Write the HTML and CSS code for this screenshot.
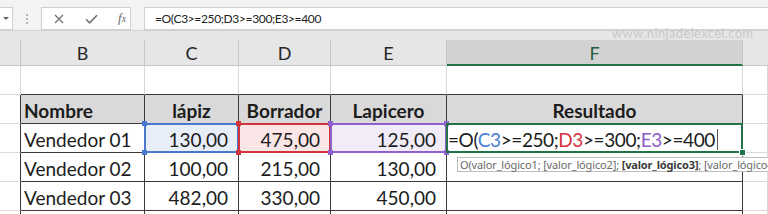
FILE: index.html
```html
<!DOCTYPE html>
<html lang="es">
<head>
<meta charset="utf-8">
<title>Excel - función O</title>
<link rel="stylesheet" href="styles.css">
</head>
<body>
<div class="app">
  <div class="toolbar">
    <div class="namebox"><span class="arrow"></span></div>
    <div class="dots"><i></i><i></i><i></i></div>
    <div class="fxbox">
      <svg class="ic-x" width="10" height="10" viewBox="0 0 10 10"><path d="M1 1L9 9M9 1L1 9" stroke="#707070" stroke-width="1.3" fill="none"/></svg>
      <svg class="ic-ok" width="13" height="10" viewBox="0 0 13 10"><path d="M1 5.2L4.6 8.8L12 1.2" stroke="#707070" stroke-width="1.6" fill="none"/></svg>
      <span class="ic-fx"><i>f</i><i class="sx">x</i></span>
    </div>
    <div class="formula">=O(C3&gt;=250;D3&gt;=300;E3&gt;=400</div>
  </div>
  <div class="watermark">www.ninjadelexcel.com</div>

  <div class="hdrwrap">
    <div class="cols colhdr">
      <div class="h"></div>
      <div class="h">B</div>
      <div class="h">C</div>
      <div class="h">D</div>
      <div class="h">E</div>
      <div class="h sel">F</div>
      <div class="h last"></div>
    </div>
  </div>

  <div class="cols sheet">
    <!-- row 1 -->
    <div class="c"></div>
    <div class="c top"></div>
    <div class="c top"></div>
    <div class="c top"></div>
    <div class="c top"></div>
    <div class="c top"></div>
    <div class="c"></div>
    <!-- row 2 -->
    <div class="c lb"></div>
    <div class="c t th left">Nombre</div>
    <div class="c t th">lápiz</div>
    <div class="c t th">Borrador</div>
    <div class="c t th">Lapicero</div>
    <div class="c t th">Resultado</div>
    <div class="c"></div>
    <!-- row 3 -->
    <div class="c lb"></div>
    <div class="c t">Vendedor 01</div>
    <div class="c t num ref blue">130,00<span class="hd tl"></span><span class="hd tr"></span><span class="hd bl"></span><span class="hd br"></span></div>
    <div class="c t num ref red">475,00<span class="hd tl"></span><span class="hd tr"></span><span class="hd bl"></span><span class="hd br"></span></div>
    <div class="c t num ref purple">125,00<span class="hd tl"></span><span class="hd tr"></span><span class="hd bl"></span><span class="hd br"></span></div>
    <div class="c t active"><span class="ftxt">=O(<span class="rb">C3</span>&gt;=250;<span class="rr">D3</span>&gt;=300;<span class="rp">E3</span>&gt;=400</span><span class="caret"></span><span class="fill"></span>
      <div class="tip">O(valor_lógico1; [valor_lógico2]; <b>[valor_lógico3]</b>; [valor_lógico4]</div>
    </div>
    <div class="c"></div>
    <!-- row 4 -->
    <div class="c lb"></div>
    <div class="c t">Vendedor 02</div>
    <div class="c t num">100,00</div>
    <div class="c t num">215,00</div>
    <div class="c t num">130,00</div>
    <div class="c t"></div>
    <div class="c"></div>
    <!-- row 5 -->
    <div class="c lb"></div>
    <div class="c t">Vendedor 03</div>
    <div class="c t num">482,00</div>
    <div class="c t num">330,00</div>
    <div class="c t num">450,00</div>
    <div class="c t"></div>
    <div class="c"></div>
    <!-- row 6 -->
    <div class="c lb"></div>
    <div class="c t"></div>
    <div class="c t"></div>
    <div class="c t"></div>
    <div class="c t"></div>
    <div class="c t"></div>
    <div class="c"></div>
  </div>
</div>
</body>
</html>
```

FILE: styles.css
```css
html, body {
  margin: 0;
  padding: 0;
  background: #ffffff;
  overflow: hidden;
}
.app {
  position: relative;
  width: 768px;
  height: 214px;
  overflow: hidden;
  font-family: Lato, "Liberation Sans", sans-serif;
  color: #1c1c1c;
}

/* ---------- formula bar ---------- */
.toolbar {
  background: #f3f3f3;
  border-bottom: 1px solid #d2d2d2;
  display: flex;
  align-items: flex-start;
  padding-top: 7px;
  box-sizing: border-box;
  height: 31px;
}
.namebox {
  width: 13px;
  height: 23px;
  box-sizing: border-box;
  background: #fff;
  border: 1px solid #d0d0d0;
  border-left: none;
  position: relative;
}
.arrow {
  position: absolute;
  left: 3px;
  top: 9px;
  width: 0;
  height: 0;
  border-left: 3px solid transparent;
  border-right: 3px solid transparent;
  border-top: 3px solid #666;
}
.dots {
  width: 28px;
  height: 23px;
  display: flex;
  flex-direction: column;
  align-items: center;
  justify-content: center;
  gap: 2px;
}
.dots i {
  display: block;
  width: 2px;
  height: 2px;
  background: #b4b4b4;
}
.fxbox {
  width: 90px;
  height: 23px;
  box-sizing: border-box;
  background: #fff;
  border: 1px solid #d0d0d0;
  position: relative;
}
.ic-x { position: absolute; left: 12px; top: 6px; }
.ic-ok { position: absolute; left: 43px; top: 6px; }
.ic-fx {
  position: absolute;
  left: 76px;
  top: 2px;
  font-family: "Liberation Serif", serif;
  font-size: 13px;
  color: #6a6a6a;
  line-height: 16px;
}
.ic-fx .sx { font-size: 10px; }
.formula {
  margin-left: 13px;
  flex: 1;
  height: 23px;
  box-sizing: border-box;
  background: #fff;
  border: 1px solid #d0d0d0;
  border-right: none;
  padding-left: 10px;
  font-size: 12px;
  letter-spacing: -0.35px;
  line-height: 21px;
  color: #222;
}
.watermark {
  position: absolute;
  left: 612px;
  top: 27px;
  font-family: Lato, sans-serif;
  font-size: 13px;
  letter-spacing: 0.35px;
  color: #c9c9c9;
  line-height: 13px;
}

/* ---------- grid ---------- */
.cols {
  display: grid;
  grid-template-columns: 21px 124px 94px 92px 116px 296px 1fr;
}
.hdrwrap {
  background: #e6e6e6;
  padding-top: 9px;
}
.colhdr { grid-auto-rows: 26px; }
.h {
  box-sizing: border-box;
  border-right: 1px solid #c6c6c6;
  border-bottom: 1px solid #c6c6c6;
  display: flex;
  align-items: center;
  justify-content: center;
  font-size: 18px;
  color: #262626;
  padding-top: 1px;
}
.h.last { border-right: none; }
.h.sel {
  background: #d2d2d2;
  border-bottom: 2px solid #217346;
  color: #2a5a3e;
}

.sheet { grid-auto-rows: 29px; }
.c {
  box-sizing: border-box;
  border-right: 1px solid #dadada;
  border-bottom: 1px solid #dadada;
  display: flex;
  align-items: center;
  padding: 2px 3px 0;
  font-size: 19px;
  white-space: nowrap;
  position: relative;
}
.c.top { border-bottom-color: #3a3a3a; }
.c.lb { border-right-color: #3a3a3a; }
.c.t {
  border-right-color: #3a3a3a;
  border-bottom-color: #3a3a3a;
}
.th {
  background: #d9d9d9;
  font-weight: 700;
  justify-content: center;
}
.th.left { justify-content: flex-start; }
.num { justify-content: flex-end; padding-right: 10px; }

/* reference highlight */
.ref::before {
  content: "";
  position: absolute;
  left: -1px;
  top: -1px;
  right: -1px;
  bottom: -1px;
  border: 2px solid var(--rc);
  pointer-events: none;
}
.ref { background: var(--rbg); }
.blue { --rc: #4a78cf; --rbg: #e8eef8; }
.red { --rc: #d0343d; --rbg: #fbe6e7; }
.purple { --rc: #9060cc; --rbg: #f1ecf8; }
.hd {
  position: absolute;
  width: 5px;
  height: 5px;
  background: var(--rc);
  z-index: 2;
}
.hd.tl { left: -3px; top: -3px; }
.hd.tr { right: -3px; top: -3px; }
.hd.bl { left: -3px; bottom: -3px; }
.hd.br { right: -3px; bottom: -3px; }

/* active cell */
.active { padding-left: 1px; z-index: 3; }
.active::before {
  content: "";
  position: absolute;
  left: -1px;
  top: -1px;
  right: -1px;
  bottom: -1px;
  border: 2px solid #217346;
  pointer-events: none;
}
.ftxt { letter-spacing: -0.4px; }
.rb { color: #4a7fd4; }
.rr { color: #d4343e; }
.rp { color: #8f5ccb; }
.caret {
  display: inline-block;
  width: 1px;
  height: 21px;
  background: #555;
  margin-left: 2px;
}
.fill {
  position: absolute;
  right: -4px;
  bottom: -4px;
  width: 5px;
  height: 5px;
  background: #217346;
  border: 1px solid #fff;
}
.tip {
  position: absolute;
  left: 10px;
  top: 33px;
  height: 13px;
  padding: 0 3px 0 2px;
  background: #fff;
  border: 1px solid #bdbdbd;
  font-family: "Noto Sans", sans-serif;
  font-size: 11px;
  letter-spacing: -0.15px;
  line-height: 13px;
  color: #6a6a6a;
  white-space: nowrap;
}
.tip b { color: #3a3a3a; }
```
